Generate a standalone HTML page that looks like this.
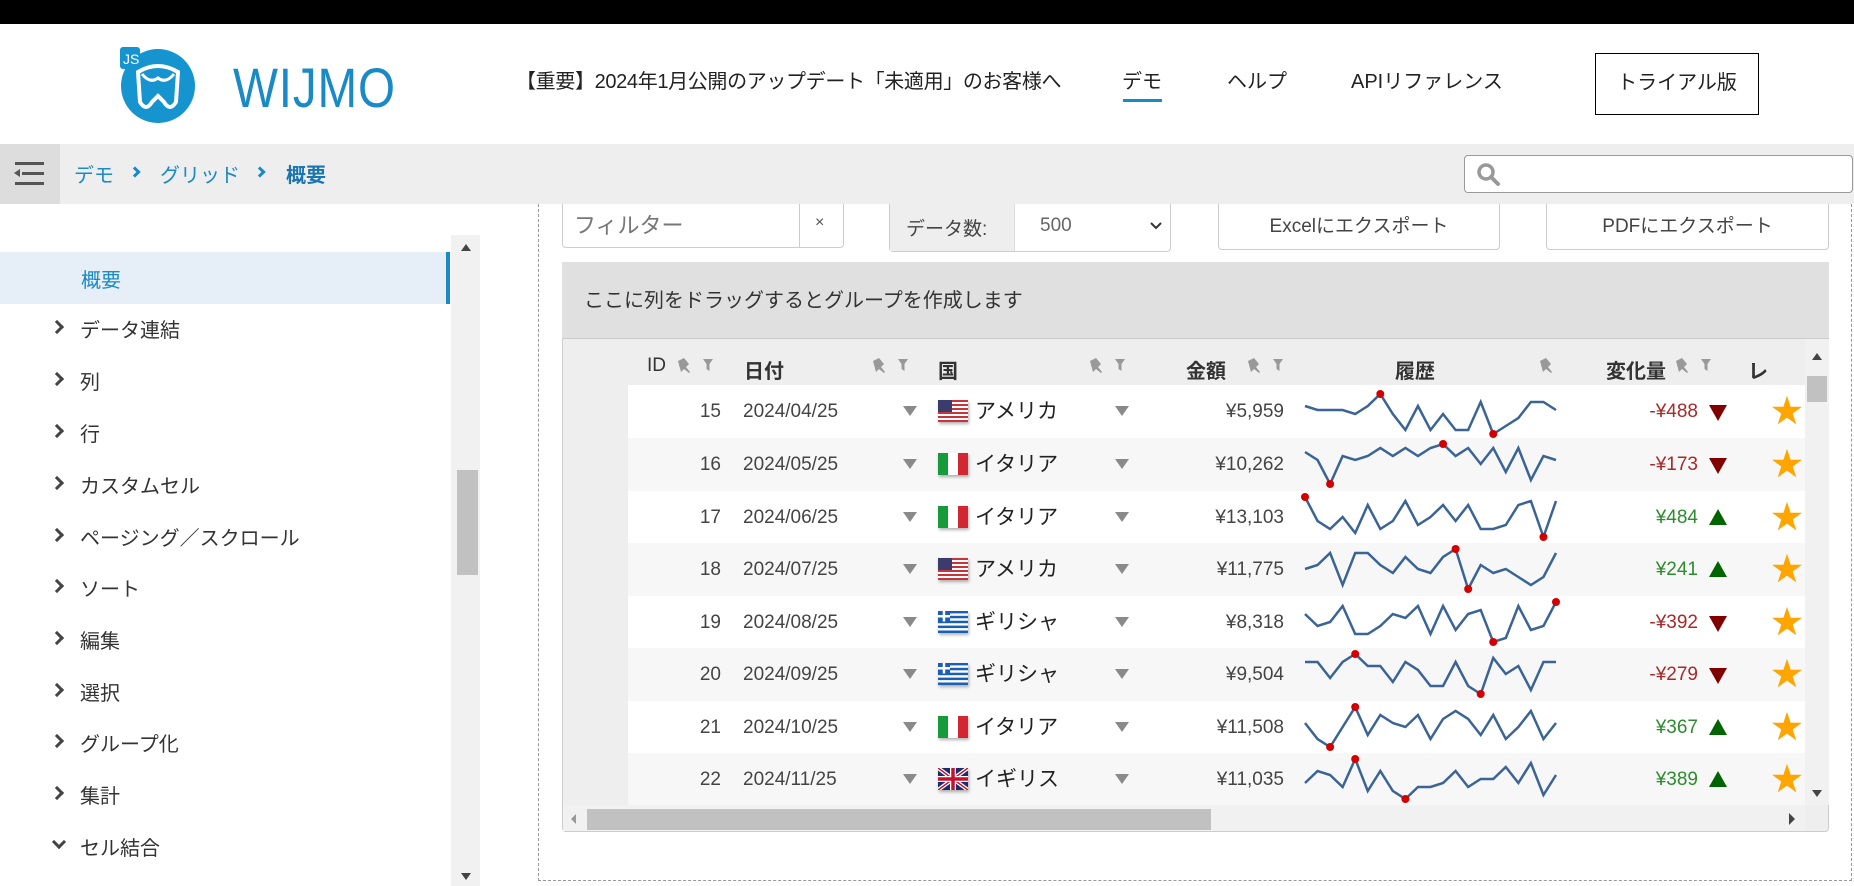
<!DOCTYPE html>
<html><head><meta charset="utf-8">
<style>
*{box-sizing:border-box;margin:0;padding:0}
body{width:1854px;height:886px;overflow:hidden;background:#fff;font-family:"Liberation Sans","Noto Sans CJK JP",sans-serif;color:#333;position:relative}
.a{position:absolute;white-space:nowrap}
.side{font-size:20px;color:#333}
.chev{position:absolute;left:52px;width:10px;height:10px;border-right:3.5px solid #444;border-top:3.5px solid #444;transform:rotate(45deg)}
.row{position:absolute;left:628px;width:1177px;height:53px;font-size:19px;color:#444}
.row div{position:absolute;top:0;line-height:53px;white-space:nowrap}
.hd{font-size:20px;font-weight:bold;color:#333}
.row div.tri{top:21px;width:0;height:0;border-left:7px solid transparent;border-right:7px solid transparent;border-top:10px solid #8a8a8a;line-height:0}
.row div.dn{top:20px;left:1081px;width:0;height:0;border-left:9px solid transparent;border-right:9px solid transparent;border-top:16px solid #800000;line-height:0}
.row div.up{top:18px;left:1081px;width:0;height:0;border-left:9px solid transparent;border-right:9px solid transparent;border-bottom:16px solid #006400;line-height:0}
.flag{width:30px;height:22px;top:15px!important;box-shadow:1px 2px 3px rgba(0,0,0,.3)}
.star{color:#ffa500;font-size:32px}
svg.sp{position:absolute;left:671px;top:0}
.bc{position:absolute;top:168px;width:8px;height:8px;border-right:3px solid #1a8ac6;border-top:3px solid #1a8ac6;transform:rotate(45deg)}
</style></head><body>
<div class="a" style="left:0;top:0;width:1854px;height:24px;background:#000"></div>
<svg class="a" style="left:118px;top:46px" width="82" height="80" viewBox="0 0 82 80">
<circle cx="40" cy="40" r="37" fill="#1594cf"/>
<rect x="2" y="1" width="20" height="22" rx="3" fill="#1594cf"/>
<text x="5" y="18" font-size="14" fill="#fff" font-family="Liberation Sans">JS</text>
<path d="M20 26 Q40 14 60 26 L58 56 Q52 66 46 56 L40 50 L34 56 Q28 66 22 56 Z" fill="none" stroke="#fff" stroke-width="4"/>
<path d="M24 28 Q32 38 40 32 Q48 38 56 28" fill="none" stroke="#fff" stroke-width="3"/>
</svg>
<div class="a" style="left:233px;top:58px;font-size:56px;color:#1a8ac6;letter-spacing:1px;transform:scaleX(0.85);transform-origin:left;line-height:60px">WIJMO</div>
<div class="a" style="left:516px;top:65px;font-size:20px;color:#222;letter-spacing:-0.35px">【重要】2024年1月公開のアップデート「未適用」のお客様へ</div>
<div class="a" style="left:1122px;top:65px;font-size:20px;color:#222">デモ</div>
<div class="a" style="left:1123px;top:99px;width:39px;height:3px;background:#1a8ac6"></div>
<div class="a" style="left:1227px;top:65px;font-size:20px;color:#222">ヘルプ</div>
<div class="a" style="left:1351px;top:65px;font-size:20px;color:#222">APIリファレンス</div>
<div class="a" style="left:1595px;top:53px;width:164px;height:62px;border:1.5px solid #000;font-size:20px;color:#222;text-align:center;line-height:59px">トライアル版</div>
<div class="a" style="left:0;top:144px;width:1854px;height:60px;background:#eee"></div>
<div class="a" style="left:0;top:144px;width:60px;height:60px;background:#ddd"></div>
<div class="a" style="left:15px;top:162px;width:29px;height:3px;background:#555"></div>
<div class="a" style="left:22px;top:172px;width:22px;height:3px;background:#555"></div>
<div class="a" style="left:15px;top:182px;width:29px;height:3px;background:#555"></div>
<div class="a" style="left:14px;top:169px;width:0;height:0;border-top:4px solid transparent;border-bottom:4px solid transparent;border-right:6px solid #555"></div>
<div class="a" style="left:74px;top:159px;font-size:20px;color:#1a8ac6">デモ</div>
<div class="bc" style="left:131px"></div>
<div class="a" style="left:160px;top:159px;font-size:20px;color:#1a8ac6">グリッド</div>
<div class="bc" style="left:256px"></div>
<div class="a" style="left:286px;top:159px;font-size:20px;color:#1a75b0;font-weight:bold">概要</div>
<div class="a" style="left:1464px;top:155px;width:389px;height:38px;background:#fff;border:1.5px solid #999;border-radius:4px"></div>
<svg class="a" style="left:1476px;top:162px" width="26" height="26" viewBox="0 0 26 26"><circle cx="10" cy="10" r="7" fill="none" stroke="#999" stroke-width="3.5"/><path d="M15 15 L22 22" stroke="#999" stroke-width="4" stroke-linecap="round"/></svg>
<div class="a" style="left:0;top:252px;width:446px;height:52px;background:#e6eef7"></div>
<div class="a" style="left:446px;top:252px;width:4px;height:52px;background:#1a8ac6"></div>
<div class="a side" style="left:81px;top:264px;color:#1a8ac6">概要</div>
<div class="a" style="left:451px;top:235px;width:29px;height:651px;background:#f1f1f1"></div>
<div class="a" style="left:461px;top:244px;border-left:5px solid transparent;border-right:5px solid transparent;border-bottom:7px solid #444"></div>
<div class="a" style="left:457px;top:470px;width:21px;height:105px;background:#c1c1c1"></div>
<div class="a" style="left:461px;top:873px;border-left:5px solid transparent;border-right:5px solid transparent;border-top:7px solid #444"></div>
<div class="chev" style="top:322px"></div><div class="a side" style="left:80px;top:314px">データ連結</div>
<div class="chev" style="top:374px"></div><div class="a side" style="left:80px;top:366px">列</div>
<div class="chev" style="top:426px"></div><div class="a side" style="left:80px;top:418px">行</div>
<div class="chev" style="top:478px"></div><div class="a side" style="left:80px;top:470px">カスタムセル</div>
<div class="chev" style="top:530px"></div><div class="a side" style="left:80px;top:522px">ページング／スクロール</div>
<div class="chev" style="top:581px"></div><div class="a side" style="left:80px;top:573px">ソート</div>
<div class="chev" style="top:633px"></div><div class="a side" style="left:80px;top:625px">編集</div>
<div class="chev" style="top:685px"></div><div class="a side" style="left:80px;top:677px">選択</div>
<div class="chev" style="top:736px"></div><div class="a side" style="left:80px;top:728px">グループ化</div>
<div class="chev" style="top:788px"></div><div class="a side" style="left:80px;top:780px">集計</div>
<div class="chev" style="top:837px;left:54px;transform:rotate(135deg)"></div><div class="a side" style="left:80px;top:832px">セル結合</div>
<div class="a" style="left:538px;top:204px;width:1314px;height:677px;border:1px dashed #999;border-top:none"></div>
<div class="a" style="left:562px;top:204px;width:282px;height:44px;border:1px solid #ccc;border-top:none;border-radius:0 0 4px 4px;background:#fff"></div>
<div class="a" style="left:799px;top:204px;width:1px;height:43px;background:#ccc"></div>
<div class="a" style="left:574px;top:208px;font-size:22px;color:#777">フィルター</div>
<div class="a" style="left:815px;top:214px;font-size:16px;color:#555">×</div>
<div class="a" style="left:889px;top:204px;width:282px;height:48px;border:1px solid #ccc;border-top:none;border-radius:0 0 4px 4px;background:#fff"></div>
<div class="a" style="left:890px;top:204px;width:125px;height:47px;background:#eee;border-right:1px solid #ddd"></div>
<div class="a" style="left:906px;top:214px;font-size:19px;color:#444">データ数:</div>
<div class="a" style="left:1040px;top:215px;font-size:19px;color:#666">500</div>
<svg class="a" style="left:1149px;top:221px" width="14" height="10" viewBox="0 0 14 10"><path d="M2 2 L7 7 L12 2" fill="none" stroke="#333" stroke-width="2"/></svg>
<div class="a" style="left:1218px;top:204px;width:282px;height:46px;border:1px solid #ccc;border-top:none;border-radius:0 0 4px 4px;background:#fff;text-align:center;line-height:46px;font-size:19px;color:#444">Excelにエクスポート</div>
<div class="a" style="left:1546px;top:204px;width:283px;height:46px;border:1px solid #ccc;border-top:none;border-radius:0 0 4px 4px;background:#fff;text-align:center;line-height:46px;font-size:19px;color:#444">PDFにエクスポート</div>
<div class="a" style="left:562px;top:262px;width:1267px;height:76px;background:#e0e0e0"></div>
<div class="a" style="left:584px;top:284px;font-size:20px;color:#333">ここに列をドラッグするとグループを作成します</div>
<div class="a" style="left:562px;top:338px;width:1267px;height:494px;background:#eee;border:1px solid #ccc;border-radius:0 0 4px 4px;overflow:hidden"></div>
<div class="a hd" style="left:647px;top:355px;font-weight:normal;font-size:19px">ID</div>
<div class="a hd" style="left:744px;top:355px">日付</div>
<div class="a hd" style="left:938px;top:355px">国</div>
<div class="a hd" style="left:1186px;top:355px">金額</div>
<div class="a hd" style="left:1395px;top:355px">履歴</div>
<div class="a hd" style="left:1606px;top:355px">変化量</div>
<div class="a hd" style="left:1748px;top:355px;width:57px;overflow:hidden">レ</div>
<svg class="a" style="left:0;top:0" width="1854" height="886">
<g fill="#999">
<g id="pf"><path d="M678 361 l6 -3 l5 6 l-3 3 l4 5 l-1 1 l-5 -4 l-3 3 z"/><path d="M703 359 h10 l-3.5 5 v7 l-3 -2 v-5 z"/></g>
<use href="#pf" x="195"/><use href="#pf" x="412"/><use href="#pf" x="570"/><use href="#pf" x="998"/>
<path d="M1540 361 l6 -3 l5 6 l-3 3 l4 5 l-1 1 l-5 -4 l-3 3 z"/>
</g>
</svg>
<div class="a" style="left:1805px;top:339px;width:24px;height:466px;background:#f1f1f1"></div>
<div class="a" style="left:1812px;top:353px;border-left:5px solid transparent;border-right:5px solid transparent;border-bottom:7px solid #444"></div>
<div class="a" style="left:1807px;top:376px;width:20px;height:26px;background:#c1c1c1"></div>
<div class="a" style="left:1812px;top:790px;border-left:5px solid transparent;border-right:5px solid transparent;border-top:7px solid #444"></div>
<div class="a" style="left:563px;top:805px;width:1242px;height:26px;background:#f1f1f1"></div>
<div class="a" style="left:587px;top:809px;width:624px;height:21px;background:#c1c1c1"></div>
<div class="a" style="left:571px;top:814px;border-top:5px solid transparent;border-bottom:5px solid transparent;border-right:5px solid #999"></div>
<div class="a" style="left:1789px;top:813px;border-top:6px solid transparent;border-bottom:6px solid transparent;border-left:6px solid #444"></div>

<svg width="0" height="0" style="position:absolute"><defs>
<g id="us"><rect width="30" height="22" fill="#fff"/><g fill="#c8343a"><rect y="0" width="30" height="2"/><rect y="4" width="30" height="2"/><rect y="8" width="30" height="2"/><rect y="12" width="30" height="2"/><rect y="16" width="30" height="2"/><rect y="20" width="30" height="2"/></g><rect width="14" height="12" fill="#3c3b6e"/></g>
<g id="it"><rect width="10" height="22" fill="#169a3a"/><rect x="10" width="10" height="22" fill="#fff"/><rect x="20" width="10" height="22" fill="#d22630"/></g>
<g id="gr"><rect width="30" height="22" fill="#1a5fb4"/><g fill="#fff"><rect y="2.4" x="12" width="18" height="2.4"/><rect y="7.3" x="12" width="18" height="2.4"/><rect y="12.2" width="30" height="2.4"/><rect y="17.1" width="30" height="2.4"/><rect y="4" width="12" height="2.5"/><rect x="4.7" width="2.5" height="10.5"/></g></g>
<g id="uk"><rect width="30" height="22" fill="#1c2d6e"/><path d="M0 0 L30 22 M30 0 L0 22" stroke="#fff" stroke-width="4"/><path d="M0 0 L30 22 M30 0 L0 22" stroke="#c8102e" stroke-width="1.5"/><path d="M15 0 V22 M0 11 H30" stroke="#fff" stroke-width="6"/><path d="M15 0 V22 M0 11 H30" stroke="#c8102e" stroke-width="3.5"/></g>
</defs></svg>

<div class="row" style="top:385px;height:53px;background:#fff">
<div style="right:1084px">15</div><div style="left:115px">2024/04/25</div><div class="tri" style="left:275px"></div>
<svg class="flag" style="position:absolute;left:310px" width="30" height="22"><use href="#us"/></svg><div style="left:347px;font-size:21px;color:#222">アメリカ</div><div class="tri" style="left:487px"></div>
<div style="right:521px">¥5,959</div>
<svg class="sp" width="263" height="52" viewBox="-6 -6 263 52" style="top:3px"><polyline points="0,12 12.55,16 25.1,16 37.65,16 50.2,20 62.75,12 75.3,0 87.85,20 100.4,36 112.95,12 125.5,36 138.05,20 150.6,36 163.15,36 175.7,8 188.25,40 200.8,32 213.35,24 225.9,8 238.45,8 251,16" fill="none" stroke="#3b6496" stroke-width="2.5"/><circle cx="75.3" cy="0" r="4" fill="#d40000"/><circle cx="188.25" cy="40" r="4" fill="#d40000"/></svg>
<div style="right:107px;color:#a52a2a">-¥488</div><div class="dn"></div><div class="star" style="left:1143px">★</div>
</div>
<div class="row" style="top:438px;background:#f7f7f7">
<div style="right:1084px">16</div><div style="left:115px">2024/05/25</div><div class="tri" style="left:275px"></div>
<svg class="flag" style="position:absolute;left:310px" width="30" height="22"><use href="#it"/></svg><div style="left:347px;font-size:21px;color:#222">イタリア</div><div class="tri" style="left:487px"></div>
<div style="right:521px">¥10,262</div>
<svg class="sp" width="263" height="52" viewBox="-6 -6 263 52"><polyline points="0,8 12.55,16 25.1,40 37.65,12 50.2,16 62.75,12 75.3,4 87.85,12 100.4,4 112.95,12 125.5,4 138.05,0 150.6,12 163.15,4 175.7,20 188.25,4 200.8,28 213.35,4 225.9,36 238.45,12 251,16" fill="none" stroke="#3b6496" stroke-width="2.5"/><circle cx="138.05" cy="0" r="4" fill="#d40000"/><circle cx="25.1" cy="40" r="4" fill="#d40000"/></svg>
<div style="right:107px;color:#a52a2a">-¥173</div><div class="dn"></div><div class="star" style="left:1143px">★</div>
</div>
<div class="row" style="top:491px;background:#fff">
<div style="right:1084px">17</div><div style="left:115px">2024/06/25</div><div class="tri" style="left:275px"></div>
<svg class="flag" style="position:absolute;left:310px" width="30" height="22"><use href="#it"/></svg><div style="left:347px;font-size:21px;color:#222">イタリア</div><div class="tri" style="left:487px"></div>
<div style="right:521px">¥13,103</div>
<svg class="sp" width="263" height="52" viewBox="-6 -6 263 52"><polyline points="0,0 12.55,24 25.1,32 37.65,20 50.2,36 62.75,8 75.3,32 87.85,24 100.4,4 112.95,28 125.5,20 138.05,8 150.6,24 163.15,8 175.7,32 188.25,32 200.8,28 213.35,8 225.9,4 238.45,40 251,4" fill="none" stroke="#3b6496" stroke-width="2.5"/><circle cx="0" cy="0" r="4" fill="#d40000"/><circle cx="238.45" cy="40" r="4" fill="#d40000"/></svg>
<div style="right:107px;color:#2e8b2e">¥484</div><div class="up"></div><div class="star" style="left:1143px">★</div>
</div>
<div class="row" style="top:543px;background:#f7f7f7">
<div style="right:1084px">18</div><div style="left:115px">2024/07/25</div><div class="tri" style="left:275px"></div>
<svg class="flag" style="position:absolute;left:310px" width="30" height="22"><use href="#us"/></svg><div style="left:347px;font-size:21px;color:#222">アメリカ</div><div class="tri" style="left:487px"></div>
<div style="right:521px">¥11,775</div>
<svg class="sp" width="263" height="52" viewBox="-6 -6 263 52"><polyline points="0,20 12.55,16 25.1,4 37.65,36 50.2,4 62.75,4 75.3,16 87.85,24 100.4,8 112.95,20 125.5,24 138.05,8 150.6,0 163.15,40 175.7,16 188.25,24 200.8,20 213.35,28 225.9,36 238.45,28 251,4" fill="none" stroke="#3b6496" stroke-width="2.5"/><circle cx="150.6" cy="0" r="4" fill="#d40000"/><circle cx="163.15" cy="40" r="4" fill="#d40000"/></svg>
<div style="right:107px;color:#2e8b2e">¥241</div><div class="up"></div><div class="star" style="left:1143px">★</div>
</div>
<div class="row" style="top:596px;background:#fff">
<div style="right:1084px">19</div><div style="left:115px">2024/08/25</div><div class="tri" style="left:275px"></div>
<svg class="flag" style="position:absolute;left:310px" width="30" height="22"><use href="#gr"/></svg><div style="left:347px;font-size:21px;color:#222">ギリシャ</div><div class="tri" style="left:487px"></div>
<div style="right:521px">¥8,318</div>
<svg class="sp" width="263" height="52" viewBox="-6 -6 263 52"><polyline points="0,12 12.55,24 25.1,20 37.65,4 50.2,32 62.75,32 75.3,24 87.85,12 100.4,16 112.95,4 125.5,32 138.05,4 150.6,28 163.15,12 175.7,8 188.25,40 200.8,36 213.35,4 225.9,28 238.45,24 251,0" fill="none" stroke="#3b6496" stroke-width="2.5"/><circle cx="251" cy="0" r="4" fill="#d40000"/><circle cx="188.25" cy="40" r="4" fill="#d40000"/></svg>
<div style="right:107px;color:#a52a2a">-¥392</div><div class="dn"></div><div class="star" style="left:1143px">★</div>
</div>
<div class="row" style="top:648px;background:#f7f7f7">
<div style="right:1084px">20</div><div style="left:115px">2024/09/25</div><div class="tri" style="left:275px"></div>
<svg class="flag" style="position:absolute;left:310px" width="30" height="22"><use href="#gr"/></svg><div style="left:347px;font-size:21px;color:#222">ギリシャ</div><div class="tri" style="left:487px"></div>
<div style="right:521px">¥9,504</div>
<svg class="sp" width="263" height="52" viewBox="-6 -6 263 52"><polyline points="0,8 12.55,8 25.1,24 37.65,8 50.2,0 62.75,12 75.3,12 87.85,28 100.4,8 112.95,16 125.5,32 138.05,32 150.6,8 163.15,32 175.7,40 188.25,4 200.8,20 213.35,12 225.9,36 238.45,8 251,8" fill="none" stroke="#3b6496" stroke-width="2.5"/><circle cx="50.2" cy="0" r="4" fill="#d40000"/><circle cx="175.7" cy="40" r="4" fill="#d40000"/></svg>
<div style="right:107px;color:#a52a2a">-¥279</div><div class="dn"></div><div class="star" style="left:1143px">★</div>
</div>
<div class="row" style="top:701px;background:#fff">
<div style="right:1084px">21</div><div style="left:115px">2024/10/25</div><div class="tri" style="left:275px"></div>
<svg class="flag" style="position:absolute;left:310px" width="30" height="22"><use href="#it"/></svg><div style="left:347px;font-size:21px;color:#222">イタリア</div><div class="tri" style="left:487px"></div>
<div style="right:521px">¥11,508</div>
<svg class="sp" width="263" height="52" viewBox="-6 -6 263 52"><polyline points="0,16 12.55,32 25.1,40 37.65,20 50.2,0 62.75,28 75.3,8 87.85,16 100.4,20 112.95,8 125.5,32 138.05,12 150.6,4 163.15,12 175.7,28 188.25,8 200.8,32 213.35,20 225.9,4 238.45,32 251,16" fill="none" stroke="#3b6496" stroke-width="2.5"/><circle cx="50.2" cy="0" r="4" fill="#d40000"/><circle cx="25.1" cy="40" r="4" fill="#d40000"/></svg>
<div style="right:107px;color:#2e8b2e">¥367</div><div class="up"></div><div class="star" style="left:1143px">★</div>
</div>
<div class="row" style="top:753px;height:52px;background:#f7f7f7">
<div style="right:1084px">22</div><div style="left:115px">2024/11/25</div><div class="tri" style="left:275px"></div>
<svg class="flag" style="position:absolute;left:310px" width="30" height="22"><use href="#uk"/></svg><div style="left:347px;font-size:21px;color:#222">イギリス</div><div class="tri" style="left:487px"></div>
<div style="right:521px">¥11,035</div>
<svg class="sp" width="263" height="52" viewBox="-6 -6 263 52"><polyline points="0,24 12.55,12 25.1,16 37.65,28 50.2,0 62.75,32 75.3,12 87.85,32 100.4,40 112.95,28 125.5,28 138.05,24 150.6,12 163.15,28 175.7,20 188.25,20 200.8,8 213.35,24 225.9,4 238.45,36 251,16" fill="none" stroke="#3b6496" stroke-width="2.5"/><circle cx="50.2" cy="0" r="4" fill="#d40000"/><circle cx="100.4" cy="40" r="4" fill="#d40000"/></svg>
<div style="right:107px;color:#2e8b2e">¥389</div><div class="up"></div><div class="star" style="left:1143px">★</div>
</div>
</body></html>
